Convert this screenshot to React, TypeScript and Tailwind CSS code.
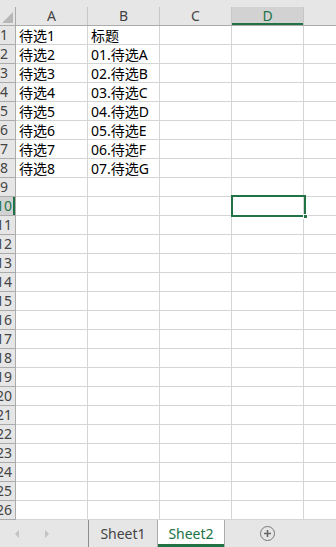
import React from "react";

const COLS = ["A", "B", "C", "D"];

const DATA: Record<number, [string, string]> = {
  1: ["待选1", "标题"],
  2: ["待选2", "01.待选A"],
  3: ["待选3", "02.待选B"],
  4: ["待选4", "03.待选C"],
  5: ["待选5", "04.待选D"],
  6: ["待选6", "05.待选E"],
  7: ["待选7", "06.待选F"],
  8: ["待选8", "07.待选G"],
};

const ROWS = Array.from({ length: 26 }, (_, i) => i + 1);
const SEL_ROW = 10;
const SEL_COL = "D";

const font = "font-['Noto_Sans','Noto_Sans_CJK_SC',sans-serif]";

function HeaderRow() {
  return (
    <div className="flex h-[19px] border-b border-[#ababab] bg-[#e6e6e6]">
      <div className="relative w-[16px] shrink-0 border-r border-[#ababab]">
        <div className="absolute right-[2px] bottom-[2px] h-0 w-0 [border-bottom:11px_solid_#b7b7b7] [border-left:11px_solid_transparent]" />
      </div>
      {COLS.map((c) => (
        <div
          key={c}
          className={
            "flex w-[72px] shrink-0 items-center justify-center border-r border-[#c6c6c6] text-[14px] leading-none " +
            (c === SEL_COL
              ? "bg-[#d2d2d2] text-[#217346] shadow-[inset_0_-2px_0_#217346]"
              : "text-[#444]")
          }
        >
          {c}
        </div>
      ))}
      <div className="flex-1" />
    </div>
  );
}

function Row({ n }: { n: number }) {
  const vals = DATA[n] ?? ["", ""];
  const selected = n === SEL_ROW;
  return (
    <div className="flex h-[19px]">
      <div
        className={
          "flex w-[16px] shrink-0 justify-end overflow-hidden border-b border-r border-[#ababab] " +
          (selected
            ? "bg-[#d2d2d2] text-[#217346] shadow-[inset_-2px_0_0_#217346]"
            : "bg-[#e6e6e6] text-[#444]")
        }
      >
        <div className="flex w-[22px] shrink-0 items-center justify-center text-[14px] leading-none">
          {n}
        </div>
      </div>
      {COLS.map((c, i) => (
        <div
          key={c}
          className="flex w-[72px] shrink-0 items-center overflow-hidden whitespace-nowrap border-b border-r border-[#d4d4d4] pl-[3px] pt-px text-[14px] leading-none text-black"
        >
          {i < 2 ? vals[i] : ""}
        </div>
      ))}
      <div className="flex-1 border-b border-[#d4d4d4]" />
    </div>
  );
}

function TabBar() {
  return (
    <div className="flex h-[27px] items-stretch bg-[#e6e6e6] text-[14px]">
      <div className="flex w-[88px] shrink-0 items-center">
        <span className="ml-[15px] h-0 w-0 border-y-[4px] border-r-[4px] border-y-transparent border-r-[#c3c3c3]" />
        <span className="ml-[26px] h-0 w-0 border-y-[4px] border-l-[4px] border-y-transparent border-l-[#c3c3c3]" />
      </div>
      <div className="flex w-[70px] shrink-0 items-center justify-center border-r border-l border-[#ababab] text-[#444] [border-left-color:#8c8c8c]">
        Sheet1
      </div>
      <div className="-mt-px flex w-[67px] shrink-0 items-center justify-center border-r border-[#ababab] bg-white text-[#217346] shadow-[inset_0_-3px_0_#217346]">
        Sheet2
      </div>
      <div className="flex flex-1 items-center">
        <div className="ml-[35px] flex h-[15px] w-[15px] items-center justify-center rounded-full border border-[#777]">
          <svg width="9" height="9" viewBox="0 0 9 9">
            <path d="M4.5 1v7M1 4.5h7" stroke="#666" strokeWidth="1.6" />
          </svg>
        </div>
      </div>
    </div>
  );
}

export default function App() {
  return (
    <div className={"h-[547px] w-[336px] overflow-hidden bg-white " + font}>
      <div className="h-[7px] bg-[#e6e6e6]" />
      <div className="relative">
        <HeaderRow />
        {ROWS.map((n) => (
          <Row key={n} n={n} />
        ))}
        {/* active cell D10 */}
        <div className="pointer-events-none absolute left-[231px] top-[188px] h-[22px] w-[75px] border-2 border-[#217346]">
          <div className="absolute -bottom-[4px] -right-[4px] h-[5px] w-[5px] border border-white bg-[#217346]" />
        </div>
      </div>
      <TabBar />
    </div>
  );
}
